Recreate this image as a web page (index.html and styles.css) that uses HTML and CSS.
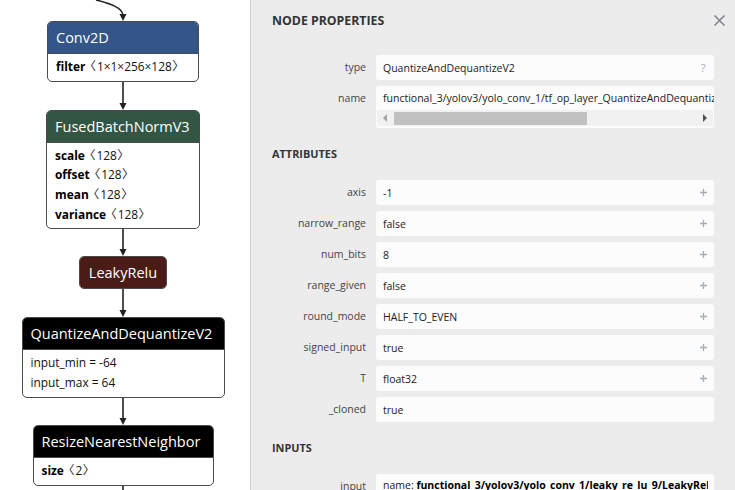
FILE: index.html
```html
<!DOCTYPE html>
<html>
<head>
<meta charset="utf-8">
<link rel="stylesheet" href="styles.css">
</head>
<body>
<div class="app">
  <div class="graph">
    <svg class="edge-top" width="246" height="21" viewBox="0 0 246 21">
      <path d="M96 0 C 112 4, 122 8, 123 15" fill="none" stroke="#222" stroke-width="1.6"/>
      <path d="M119.5 14 L123 21 L126.5 14 Z" fill="#222"/>
    </svg>
    <div class="node n-conv">
      <div class="title t-layer">Conv2D</div>
      <div class="attrs"><div><b>filter</b><i class="bo">〈</i>1×1×256×128<i class="bc">〉</i></div></div>
    </div>
    <svg class="edge" width="10" height="28" viewBox="0 0 10 28">
      <path d="M5 0 V22" stroke="#222" stroke-width="1.6"/>
      <path d="M1.5 21 L5 28 L8.5 21 Z" fill="#222"/>
    </svg>
    <div class="node n-fused">
      <div class="title t-norm">FusedBatchNormV3</div>
      <div class="attrs">
        <div><b>scale</b><i class="bo">〈</i>128<i class="bc">〉</i></div>
        <div><b>offset</b><i class="bo">〈</i>128<i class="bc">〉</i></div>
        <div><b>mean</b><i class="bo">〈</i>128<i class="bc">〉</i></div>
        <div><b>variance</b><i class="bo">〈</i>128<i class="bc">〉</i></div>
      </div>
    </div>
    <svg class="edge" width="10" height="27" viewBox="0 0 10 27">
      <path d="M5 0 V21" stroke="#222" stroke-width="1.6"/>
      <path d="M1.5 20 L5 27 L8.5 20 Z" fill="#222"/>
    </svg>
    <div class="node n-leaky">
      <div class="title t-act solo">LeakyRelu</div>
    </div>
    <svg class="edge" width="10" height="28" viewBox="0 0 10 28">
      <path d="M5 0 V22" stroke="#222" stroke-width="1.6"/>
      <path d="M1.5 21 L5 28 L8.5 21 Z" fill="#222"/>
    </svg>
    <div class="node n-quant">
      <div class="title t-black">QuantizeAndDequantizeV2</div>
      <div class="attrs plain">
        <div>input_min = -64</div>
        <div>input_max = 64</div>
      </div>
    </div>
    <svg class="edge" width="10" height="27" viewBox="0 0 10 27">
      <path d="M5 0 V21" stroke="#222" stroke-width="1.6"/>
      <path d="M1.5 20 L5 27 L8.5 20 Z" fill="#222"/>
    </svg>
    <div class="node n-resize">
      <div class="title t-black">ResizeNearestNeighbor</div>
      <div class="attrs"><div><b>size</b><i class="bo">〈</i>2<i class="bc">〉</i></div></div>
    </div>
    <svg class="edge" width="10" height="20" viewBox="0 0 10 20">
      <path d="M5 0 V20" stroke="#222" stroke-width="1.6"/>
    </svg>
  </div>

  <div class="sidebar">
    <div class="sb-head">
      <span class="sb-title">NODE PROPERTIES</span>
      <svg class="close" width="11" height="11" viewBox="0 0 11 11">
        <path d="M0.5 0.5 L10.5 10.5 M10.5 0.5 L0.5 10.5" stroke="#7a7f88" stroke-width="1.5"/>
      </svg>
    </div>

    <div class="rows">
      <div class="row">
        <div class="label">type</div>
        <div class="value"><span class="vtext">QuantizeAndDequantizeV2</span><span class="mark q">?</span></div>
      </div>
      <div class="row">
        <div class="label">name</div>
        <div class="value scrolling">
          <div class="vline">functional_3/yolov3/yolo_conv_1/tf_op_layer_QuantizeAndDequantizeV2_9</div>
          <div class="scrollbar">
            <span class="arr-l"></span>
            <span class="thumb"></span>
            <span class="spacer"></span>
            <span class="arr-r"></span>
          </div>
        </div>
      </div>
    </div>

    <div class="section">ATTRIBUTES</div>

    <div class="rows">
      <div class="row"><div class="label">axis</div><div class="value"><span class="vtext">-1</span><svg class="plus" width="7" height="7" viewBox="0 0 7 7"><path d="M3.5 0 V7 M0 3.5 H7"/></svg></div></div>
      <div class="row"><div class="label">narrow_range</div><div class="value"><span class="vtext">false</span><svg class="plus" width="7" height="7" viewBox="0 0 7 7"><path d="M3.5 0 V7 M0 3.5 H7"/></svg></div></div>
      <div class="row"><div class="label">num_bits</div><div class="value"><span class="vtext">8</span><svg class="plus" width="7" height="7" viewBox="0 0 7 7"><path d="M3.5 0 V7 M0 3.5 H7"/></svg></div></div>
      <div class="row"><div class="label">range_given</div><div class="value"><span class="vtext">false</span><svg class="plus" width="7" height="7" viewBox="0 0 7 7"><path d="M3.5 0 V7 M0 3.5 H7"/></svg></div></div>
      <div class="row"><div class="label">round_mode</div><div class="value"><span class="vtext">HALF_TO_EVEN</span><svg class="plus" width="7" height="7" viewBox="0 0 7 7"><path d="M3.5 0 V7 M0 3.5 H7"/></svg></div></div>
      <div class="row"><div class="label">signed_input</div><div class="value"><span class="vtext">true</span><svg class="plus" width="7" height="7" viewBox="0 0 7 7"><path d="M3.5 0 V7 M0 3.5 H7"/></svg></div></div>
      <div class="row"><div class="label">T</div><div class="value"><span class="vtext">float32</span><svg class="plus" width="7" height="7" viewBox="0 0 7 7"><path d="M3.5 0 V7 M0 3.5 H7"/></svg></div></div>
      <div class="row"><div class="label">_cloned</div><div class="value"><span class="vtext">true</span></div></div>
    </div>

    <div class="section">INPUTS</div>

    <div class="rows">
      <div class="row"><div class="label">input</div><div class="value tall"><span class="vtext">name: <b>functional_3/yolov3/yolo_conv_1/leaky_re_lu_9/LeakyRelu</b></span></div></div>
    </div>
  </div>
</div>
</body>
</html>
```

FILE: styles.css
```css
html, body {
  margin: 0;
  padding: 0;
}
body {
  font-family: "Open Sans", "Noto Sans", sans-serif;
  background: #fff;
}
.app {
  display: flex;
  width: 735px;
  height: 490px;
  overflow: hidden;
}

/* graph */
.graph {
  width: 250px;
  flex: none;
  box-sizing: border-box;
  padding-right: 4px;
  background: #fff;
  display: flex;
  flex-direction: column;
  align-items: center;
}
.edge-top, .edge {
  display: block;
  flex: none;
}
.node {
  flex: none;
  box-sizing: border-box;
  border: 1px solid #4a4a4a;
  border-radius: 5px;
  overflow: hidden;
  background: #fff;
}
.title {
  height: 31px;
  line-height: 31px;
  padding: 0 8px;
  color: #fff;
  font-size: 14.5px;
  white-space: nowrap;
  border-bottom: 1px solid #4a4a4a;
}
.title.solo {
  border-bottom: none;
  text-align: center;
  padding: 0;
}
.t-layer { background: #335588; }
.t-norm { background: #335544; }
.t-act { background: #4b1c17; }
.t-black { background: #000; }

.attrs {
  padding: 3px 8px 4px;
  font-size: 11.9px;
  color: #111;
  white-space: nowrap;
}
.attrs > div {
  height: 19.7px;
  line-height: 19.7px;
}
.attrs b { font-weight: 700; color: #000; }
.bo, .bc {
  font-style: normal;
  font-family: "Noto Sans CJK SC", "Noto Sans CJK JP", sans-serif;
  font-size: 12px;
  line-height: 0;
  color: #222;
}
.bo {
  margin-left: -1.5px;
  margin-right: 1px;
}
.bc {
  margin-left: 0.5px;
}

.n-conv { width: 152px; }
.n-fused { width: 154px; }
.n-leaky { width: 88px; }
.n-quant { width: 203px; }
.n-resize { width: 181px; }

/* sidebar */
.sidebar {
  flex: 1;
  min-width: 0;
  background: #ececec;
  border-left: 1px solid #cfcfcf;
  padding: 0 21px;
  font-size: 10.5px;
  color: #333;
}
.sb-head {
  height: 40px;
  display: flex;
  align-items: center;
  justify-content: space-between;
  margin-bottom: 15px;
}
.sb-title, .section {
  font-weight: 700;
  color: #333;
}
.sb-title { font-size: 12.3px; }
.section { font-size: 10.9px; }
.close {
  display: block;
  margin-right: -11px;
}
.section {
  height: 24px;
  line-height: 24px;
  margin: 14px 0;
}
.rows {
  display: flex;
  flex-direction: column;
  gap: 6px;
}
.row {
  display: flex;
  gap: 10px;
}
.label {
  width: 94px;
  flex: none;
  text-align: right;
  line-height: 25px;
  color: #444;
  white-space: nowrap;
}
.value {
  flex: 1;
  min-width: 0;
  height: 25px;
  background: #fcfcfc;
  border-radius: 3px;
  display: flex;
  align-items: center;
  padding: 0 6px 0 7px;
  overflow: hidden;
  white-space: nowrap;
}
.value.tall { height: 30px; align-items: flex-start; padding-top: 4px; box-sizing: border-box; }
.vtext {
  flex: 1;
  min-width: 0;
  overflow: hidden;
  color: #222;
}
.vtext b { font-weight: 700; color: #000; }
.plus {
  display: block;
  flex: none;
  margin-right: 1.5px;
  stroke: #a4acbb;
  stroke-width: 1.3;
  fill: none;
}
.mark {
  flex: none;
  text-align: center;
}
.mark.q { font-size: 11px; color: #a8aeb8; width: 10px; }
.value.scrolling {
  height: 42px;
  display: block;
  padding: 0;
}
.vline {
  height: 24px;
  line-height: 25px;
  padding-left: 7px;
  overflow: hidden;
  color: #222;
}
.scrollbar {
  height: 16px;
  margin: 0 1px;
  background: #f1f1f1;
  display: flex;
  align-items: center;
}
.arr-l, .arr-r {
  width: 0;
  height: 0;
  border-top: 4px solid transparent;
  border-bottom: 4px solid transparent;
}
.arr-l {
  border-right: 4px solid #a3a3a3;
  margin: 0 7px 0 6px;
}
.arr-r {
  border-left: 4px solid #505050;
  margin: 0 6px 0 6px;
}
.thumb {
  width: 193px;
  height: 13px;
  background: #c1c1c1;
}
.spacer { flex: 1; }
```
